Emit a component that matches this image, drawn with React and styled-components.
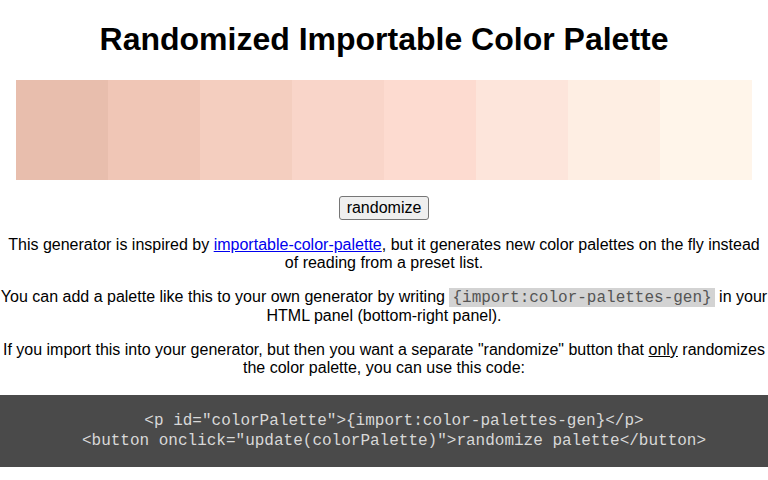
import React from "react";
import styled, { createGlobalStyle } from "styled-components";

const Global = createGlobalStyle`
  html, body { margin: 0; padding: 0; background: #ffffff; }
  body { font-family: "Liberation Sans", Arial, sans-serif; font-size: 16px; color: #000; }
`;

const Page = styled.div`
  text-align: center;
`;

const Title = styled.h1`
  font-size: 32px;
  font-weight: bold;
  margin: 21.44px 0;
`;

const Palette = styled.div`
  display: flex;
  height: 100px;
  margin: 0 16px;
`;

const Swatch = styled.div`
  flex: 1;
  background: ${(p) => p.$c};
`;

const Para = styled.p`
  margin: 16px 0;
  line-height: normal;
`;

const Button = styled.button`
  font-family: "Liberation Sans", Arial, sans-serif;
  font-size: 16px;
  padding: 2px 7px;
  border: 1px solid #767676;
  border-radius: 3px;
  background: #efefef;
  color: #000;
`;

const Link = styled.a`
  color: #0000ee;
  text-decoration: underline;
`;

const InlineCode = styled.code`
  display: inline-block;
  font-family: "Liberation Mono", "Courier New", monospace;
  font-size: 16px;
  line-height: 18px;
  background: #d3d3d3;
  color: #555;
  padding: 1px 3px 0;
`;

const CodeBlock = styled.pre`
  margin: 18px 0 0;
  background: #4a4a4a;
  color: #d8d8d8;
  font-family: "Liberation Mono", "Courier New", monospace;
  font-size: 16px;
  line-height: 20px;
  padding: 16px 0 16px 20px;
  text-align: center;
  white-space: pre;
`;

const colors = [
  "#e8bead",
  "#f0c6b6",
  "#f4cebf",
  "#f9d5c9",
  "#fddbd0",
  "#fde5db",
  "#feeee3",
  "#fff5ea",
];

export default function App() {
  return (
    <Page>
      <Global />
      <Title>Randomized Importable Color Palette</Title>
      <Palette>
        {colors.map((c) => (
          <Swatch key={c} $c={c} />
        ))}
      </Palette>
      <Para>
        <Button>randomize</Button>
      </Para>
      <Para>
        This generator is inspired by <Link href="#">importable-color-palette</Link>, but it generates new color palettes on the fly instead of reading from a preset list.
      </Para>
      <Para>
        You can add a palette like this to your own generator by writing <InlineCode>{"{import:color-palettes-gen}"}</InlineCode> in your HTML panel (bottom-right panel).
      </Para>
      <Para>
        If you import this into your generator, but then you want a separate "randomize" button that <u>only</u> randomizes the color palette, you can use this code:
      </Para>
      <CodeBlock>
        {'<p id="colorPalette">{import:color-palettes-gen}</p>\n<button onclick="update(colorPalette)">randomize palette</button>'}
      </CodeBlock>
    </Page>
  );
}
